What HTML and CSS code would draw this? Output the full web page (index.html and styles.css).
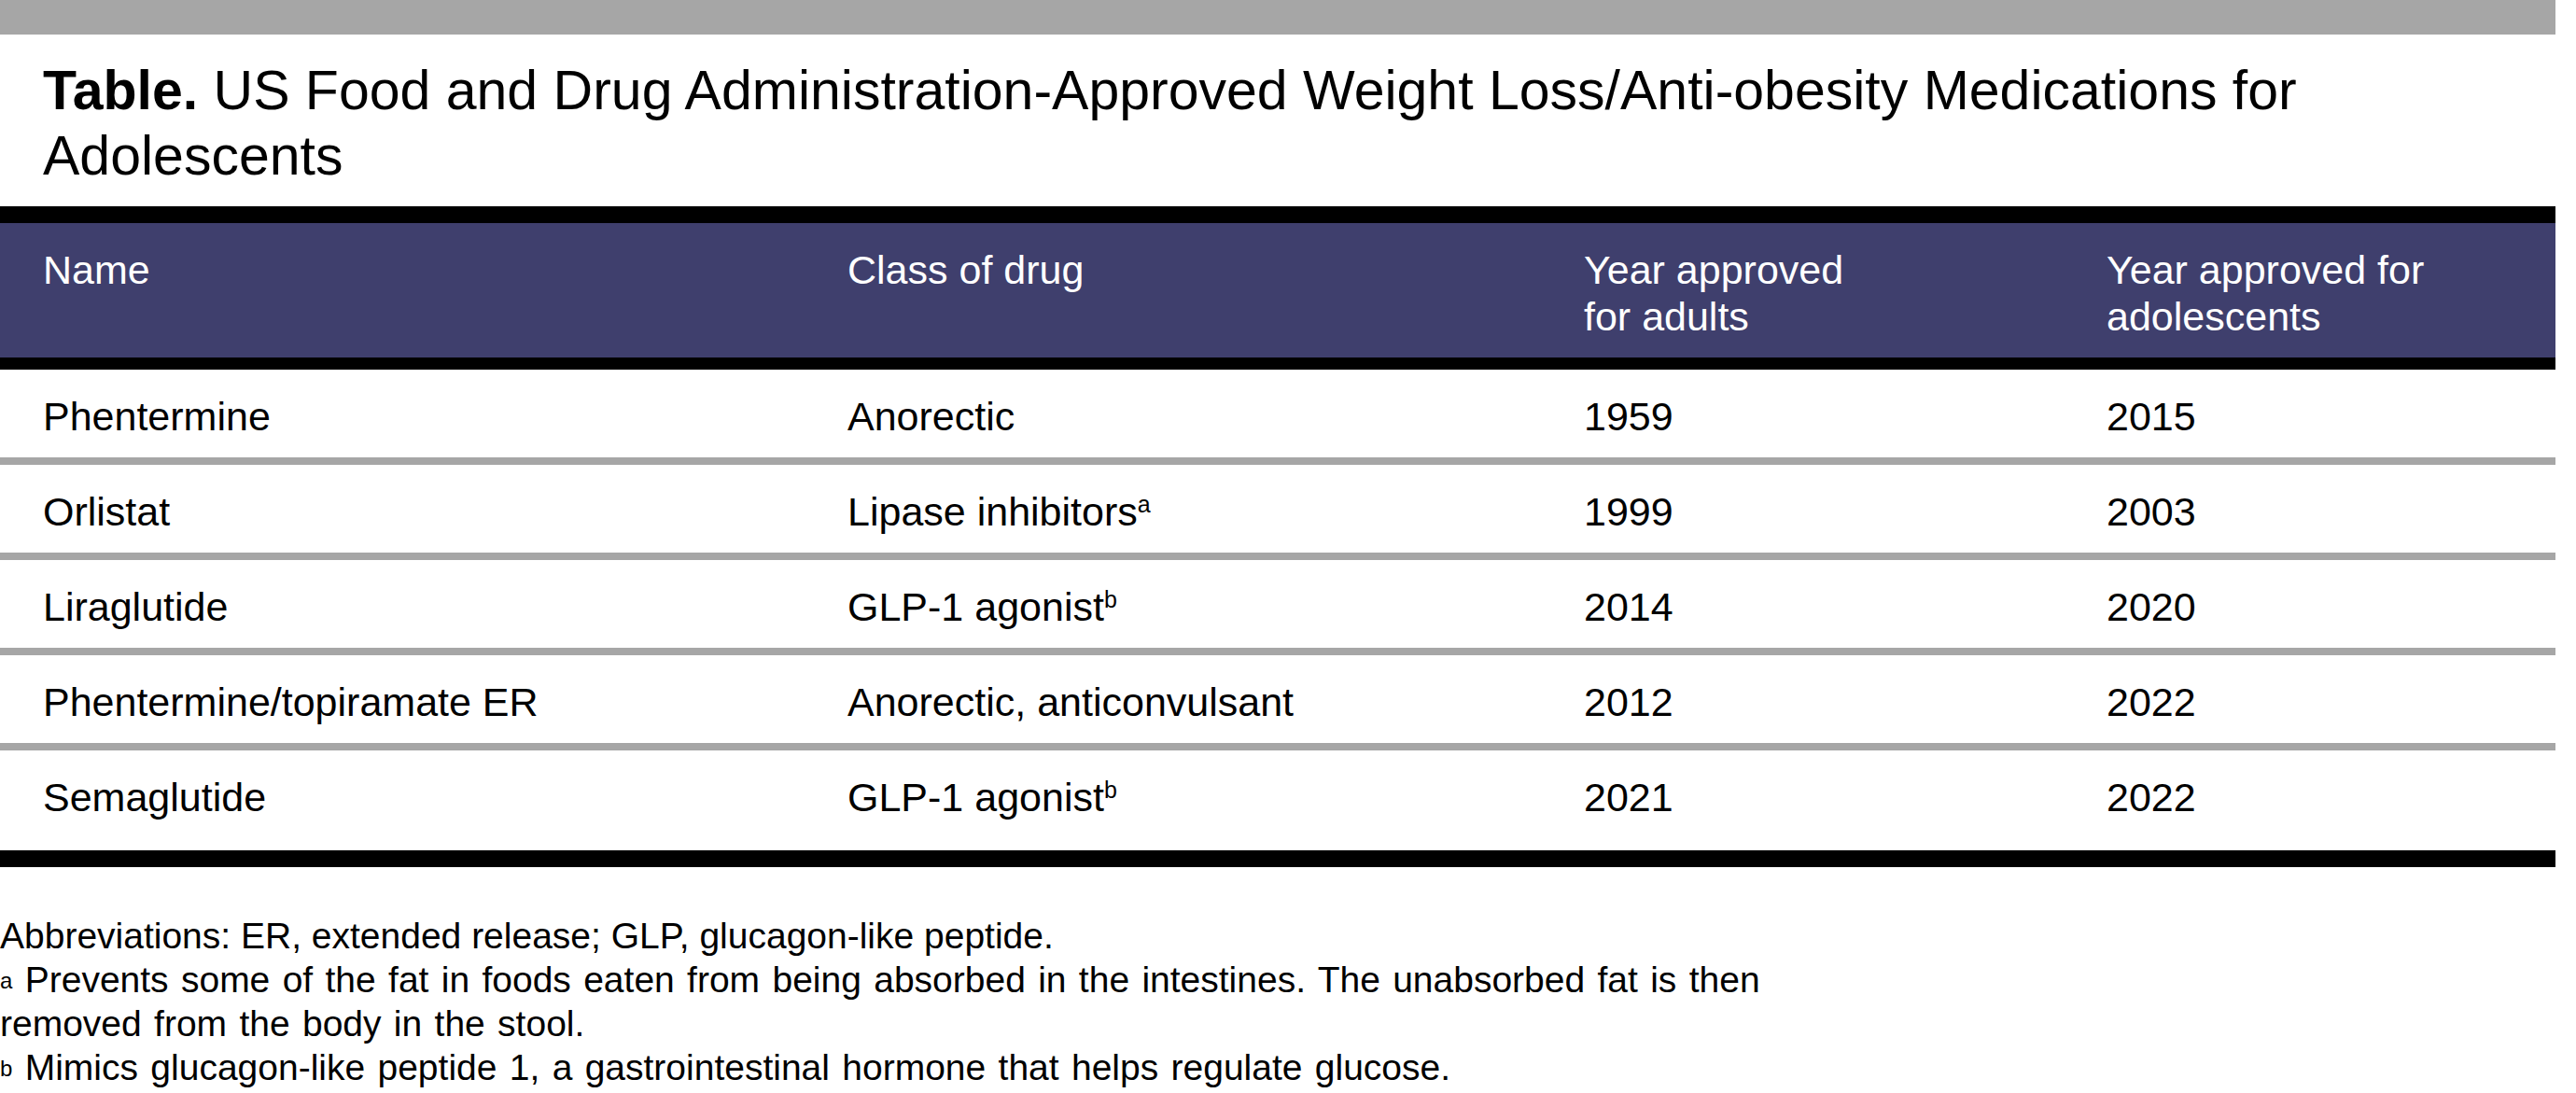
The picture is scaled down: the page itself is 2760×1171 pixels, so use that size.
FILE: index.html
```html
<!DOCTYPE html>
<html lang="en">
<head>
<meta charset="utf-8">
<title>FDA-Approved Anti-obesity Medications for Adolescents</title>
<link rel="stylesheet" href="styles.css">
</head>
<body>
<div class="page">
  <div class="topbar"></div>
  <h1 class="title"><b>Table.</b> US Food and Drug Administration-Approved Weight Loss/Anti-obesity Medications for<br>Adolescents</h1>
  <div class="table">
    <div class="row head">
      <div class="cell">Name</div>
      <div class="cell">Class of drug</div>
      <div class="cell">Year approved<br>for adults</div>
      <div class="cell">Year approved for<br>adolescents</div>
    </div>
    <div class="row">
      <div class="cell">Phentermine</div>
      <div class="cell">Anorectic</div>
      <div class="cell">1959</div>
      <div class="cell">2015</div>
    </div>
    <div class="row">
      <div class="cell">Orlistat</div>
      <div class="cell">Lipase inhibitors<sup>a</sup></div>
      <div class="cell">1999</div>
      <div class="cell">2003</div>
    </div>
    <div class="row">
      <div class="cell">Liraglutide</div>
      <div class="cell">GLP-1 agonist<sup>b</sup></div>
      <div class="cell">2014</div>
      <div class="cell">2020</div>
    </div>
    <div class="row">
      <div class="cell">Phentermine/topiramate ER</div>
      <div class="cell">Anorectic, anticonvulsant</div>
      <div class="cell">2012</div>
      <div class="cell">2022</div>
    </div>
    <div class="row last">
      <div class="cell">Semaglutide</div>
      <div class="cell">GLP-1 agonist<sup>b</sup></div>
      <div class="cell">2021</div>
      <div class="cell">2022</div>
    </div>
  </div>
  <div class="notes">
    <p>Abbreviations: ER, extended release; GLP, glucagon-like peptide.</p>
    <p class="fn"><span class="mark">a</span> Prevents some of the fat in foods eaten from being absorbed in the intestines. The unabsorbed fat is then removed from the body in the stool.</p>
    <p class="fn"><span class="mark">b</span> Mimics glucagon-like peptide 1, a gastrointestinal hormone that helps regulate glucose.</p>
  </div>
</div>
</body>
</html>
```
FILE: styles.css
```css
html, body {
  margin: 0;
  padding: 0;
  background: #ffffff;
}

body {
  font-family: "Liberation Sans", Arial, sans-serif;
  color: #000000;
}

.page {
  width: 2738px;
}

.topbar {
  height: 37px;
  background: #a6a6a6;
}

.title {
  margin: 0;
  padding: 25px 0 19px 46px;
  font-size: 59px;
  line-height: 70px;
  font-weight: normal;
}

.title b {
  font-weight: bold;
}

.table {
  border-top: 18px solid #000000;
  border-bottom: 18px solid #000000;
}

.row {
  display: grid;
  grid-template-columns: 862px 789px 560px 1fr;
  border-bottom: 8px solid #a6a6a6;
}

.row.head {
  background: #3f3f6d;
  color: #ffffff;
  border-bottom: 13px solid #000000;
}

.row.last {
  border-bottom: none;
  padding-bottom: 13px;
}

.cell {
  padding: 25px 0 19px 46px;
  font-size: 43px;
  line-height: 50px;
}

.cell sup {
  font-size: 25px;
  line-height: 1;
  vertical-align: 14px;
}

.notes {
  margin-top: 50px;
  font-size: 39px;
  line-height: 47px;
  max-width: 1980px;
}

.notes p {
  margin: 0;
}

.notes .fn {
  word-spacing: 2.5px;
}

.mark {
  font-size: 24px;
  line-height: 1;
  vertical-align: 4px;
}
```
